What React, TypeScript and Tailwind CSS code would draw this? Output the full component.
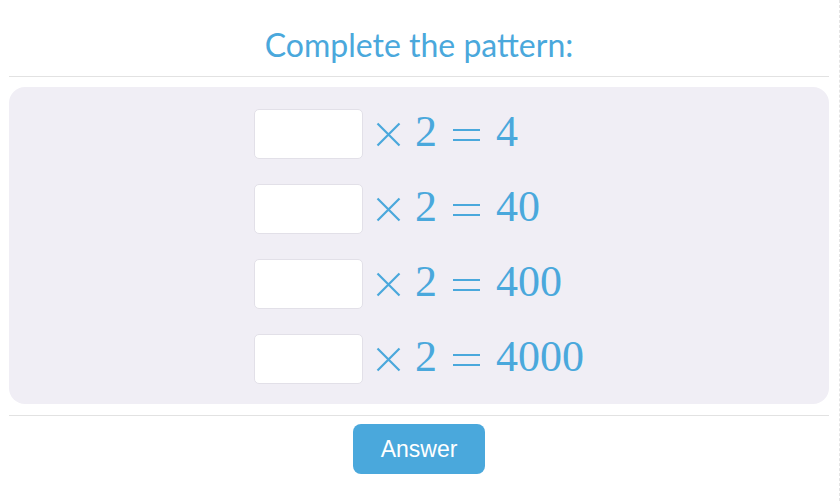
const rows = ["4", "40", "400", "4000"];

function Times() {
  return (
    <svg width="25" height="25" viewBox="0 0 25 25" className="shrink-0">
      <path d="M1.5 1.5 L23.5 23.5 M23.5 1.5 L1.5 23.5" stroke="#4aa8dc" strokeWidth="2.2" fill="none" />
    </svg>
  );
}

function Equals() {
  return (
    <svg width="27" height="14" viewBox="0 0 27 14" className="shrink-0">
      <path d="M0 2 H27 M0 12 H27" stroke="#4aa8dc" strokeWidth="2" fill="none" />
    </svg>
  );
}

function PatternRow({ result }: { result: string }) {
  return (
    <div className="flex items-center">
      <div className="h-[50px] w-[109px] shrink-0 rounded-[5px] border border-[#e2e0e8] bg-white" />
      <div className="ml-[13px] flex items-center font-['Liberation_Serif',serif] text-[44px] leading-none text-[#4aa8dc]">
        <span className="mt-[1px]">
          <Times />
        </span>
        <span className="ml-[14px] -mt-[4px]">2</span>
        <span className="ml-[16px] mt-[1px]">
          <Equals />
        </span>
        <span className="ml-[16px] -mt-[4px]">{result}</span>
      </div>
    </div>
  );
}

export default function App() {
  return (
    <div className="h-[501px] w-[840px] border-r border-dashed border-[#e4e4e4] bg-white">
      <div className="ml-[9px] w-[820px]">
        <div className="flex h-[77px] items-center justify-center border-b border-[#e2e2e2] pt-[14px]">
          <h1 className="font-['Lato',sans-serif] text-[32px] text-[#4aa8dc]">Complete the pattern:</h1>
        </div>
        <div className="mt-[10px] flex justify-center rounded-[16px] bg-[#f0eef5] pb-[20px] pt-[22px]">
          <div className="flex flex-col gap-[25px]">
            {rows.map((r) => (
              <PatternRow key={r} result={r} />
            ))}
          </div>
        </div>
        <div className="mt-[11px] flex justify-center border-t border-[#e2e2e2] pt-[8px]">
          <button
            type="button"
            className="h-[50px] w-[132px] rounded-[8px] bg-[#4aa8dc] font-['Liberation_Sans',sans-serif] text-[23px] text-white"
          >
            Answer
          </button>
        </div>
      </div>
    </div>
  );
}
